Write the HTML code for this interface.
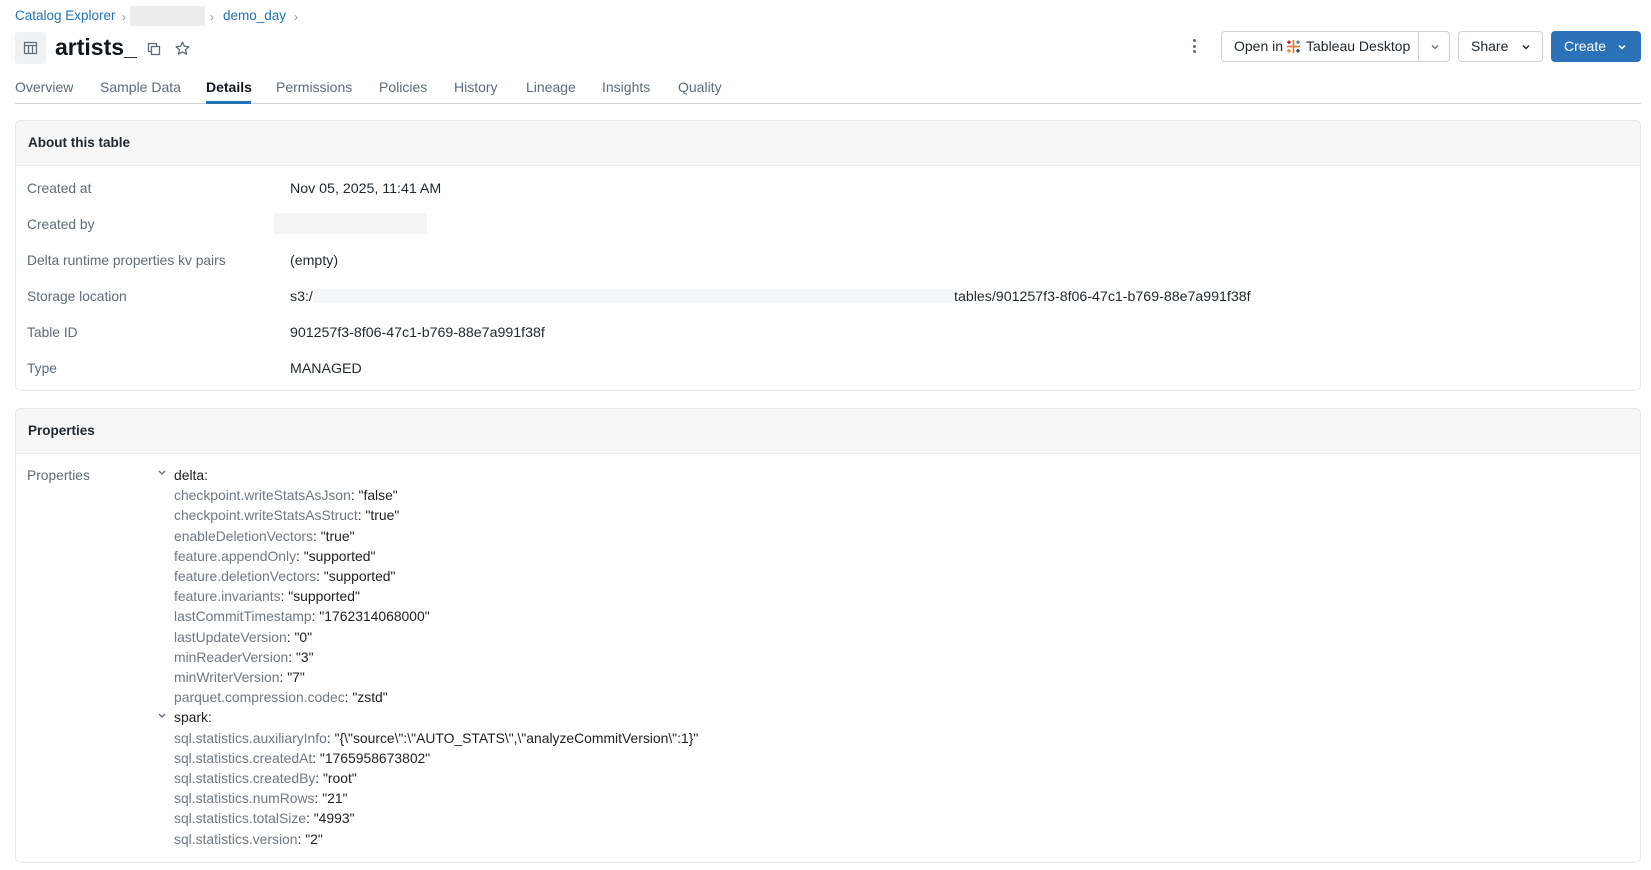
<!DOCTYPE html>
<html><head><meta charset="utf-8"><style>
*{box-sizing:border-box;margin:0;padding:0}
body{width:1651px;height:870px;background:#fff;font-family:"Liberation Sans",sans-serif;color:#1f272d;position:relative;overflow:hidden;font-size:14px}
.a{position:absolute;white-space:nowrap}
.bc{top:8px;font-size:13.5px;color:#2272b4}
.sep{color:#8a939b;font-size:12px}
.tab{top:79px;font-size:14px;color:#5f6b76}
.card{position:absolute;left:15px;width:1626px;border:1px solid #e8e8e8;border-radius:6px;overflow:hidden}
.hdr{background:#f7f7f7;border-bottom:1px solid #e8e8e8;font-weight:bold;font-size:13.5px;padding-left:12px;color:#1f272d}
.lab{color:#5f6b76;left:27px;font-size:13.8px}
.val{left:290px;color:#1f272d;font-size:14.2px}
.btn{position:absolute;top:31px;height:31px;border:1px solid #cdd1d5;border-radius:4px;background:#fff;font-size:14px;color:#1f272d;line-height:29px}
.k{color:#6f7780}
.tree{left:174px;top:465px;line-height:20.2px;font-size:13.9px;color:#1f1f1f}
</style></head><body>
<div class="a bc" style="left:15px">Catalog Explorer</div>
<div class="a sep" style="left:122px;top:10px">›</div>
<div class="a" style="left:130px;top:6px;width:75px;height:20px;background:#ececec"></div>
<div class="a sep" style="left:210px;top:10px">›</div>
<div class="a bc" style="left:223px">demo_day</div>
<div class="a sep" style="left:294px;top:10px">›</div>

<div class="a" style="left:15px;top:32px;width:31px;height:32px;background:#f0f1f2;border-radius:4px">
<svg width="31" height="32" viewBox="0 0 31 32"><rect x="9.5" y="10.5" width="12" height="11" fill="none" stroke="#5f6b76" stroke-width="1.2"/><line x1="9.5" y1="13.5" x2="21.5" y2="13.5" stroke="#5f6b76" stroke-width="1.2"/><line x1="13.5" y1="13.5" x2="13.5" y2="21.5" stroke="#5f6b76" stroke-width="1.2"/><line x1="17.5" y1="13.5" x2="17.5" y2="21.5" stroke="#5f6b76" stroke-width="1.2"/></svg></div>
<div class="a" style="left:55px;top:34px;font-size:23px;font-weight:bold;color:#11171c">artists_</div>
<svg class="a" style="left:146px;top:41px" width="16" height="16" viewBox="0 0 16 16"><rect x="2.5" y="2.5" width="8" height="8" fill="none" stroke="#5f6b76" stroke-width="1.3"/><rect x="5.5" y="5.5" width="8" height="8" fill="#fff" stroke="#5f6b76" stroke-width="1.3"/></svg>
<svg class="a" style="left:174px;top:40px" width="17" height="17" viewBox="0 0 24 24"><path d="M12 3l2.7 5.8 6.3.7-4.7 4.3 1.3 6.2L12 16.9 6.4 20l1.3-6.2L3 9.5l6.3-.7z" fill="none" stroke="#5f6b76" stroke-width="1.8" stroke-linejoin="round"/></svg>

<div class="a" style="left:1193px;top:39px;width:3px">
<div style="width:3px;height:3px;border-radius:50%;background:#5f6b76;margin-bottom:2.5px"></div><div style="width:3px;height:3px;border-radius:50%;background:#5f6b76;margin-bottom:2.5px"></div><div style="width:3px;height:3px;border-radius:50%;background:#5f6b76"></div></div>
<div class="btn" style="left:1221px;width:229px">
<span style="position:absolute;left:12px">Open in</span>
<svg style="position:absolute;left:64px;top:7px" width="15" height="15" viewBox="0 0 15 15"><g stroke-width="1.6"><line x1="7.5" y1="1" x2="7.5" y2="14" stroke="#e8762d"/><line x1="1" y1="7.5" x2="14" y2="7.5" stroke="#e8762d"/><line x1="3" y1="1.5" x2="3" y2="5" stroke="#c72037"/><line x1="1.2" y1="3.2" x2="4.8" y2="3.2" stroke="#c72037"/><line x1="12" y1="1.5" x2="12" y2="5" stroke="#5b879b"/><line x1="10.2" y1="3.2" x2="13.8" y2="3.2" stroke="#5b879b"/><line x1="3" y1="10" x2="3" y2="13.5" stroke="#eb912b"/><line x1="1.2" y1="11.8" x2="4.8" y2="11.8" stroke="#eb912b"/><line x1="12" y1="10" x2="12" y2="13.5" stroke="#1f457e"/><line x1="10.2" y1="11.8" x2="13.8" y2="11.8" stroke="#1f457e"/></g></svg>
<span style="position:absolute;left:84px">Tableau Desktop</span>
<div style="position:absolute;left:196px;top:0;width:1px;height:29px;background:#cdd1d5"></div>
<svg style="position:absolute;left:208px;top:11px" width="10" height="8" viewBox="0 0 10 8"><path d="M2 2.5l3 3 3-3" fill="none" stroke="#5f6b76" stroke-width="1.3"/></svg>
</div>
<div class="btn" style="left:1458px;width:85px"><span style="position:absolute;left:12px">Share</span>
<svg style="position:absolute;left:62px;top:11px" width="10" height="8" viewBox="0 0 10 8"><path d="M2 2.5l3 3 3-3" fill="none" stroke="#1f272d" stroke-width="1.5"/></svg></div>
<div class="btn" style="left:1551px;width:90px;background:#2b72b8;border-color:#2b72b8;color:#fff"><span style="position:absolute;left:12px">Create</span>
<svg style="position:absolute;left:65px;top:11px" width="10" height="8" viewBox="0 0 10 8"><path d="M2 2.5l3 3 3-3" fill="none" stroke="#fff" stroke-width="1.5"/></svg></div>

<div class="a tab" style="left:15px">Overview</div>
<div class="a tab" style="left:100px">Sample Data</div>
<div class="a tab" style="left:206px;color:#11171c;font-weight:bold">Details</div>
<div class="a tab" style="left:276px">Permissions</div>
<div class="a tab" style="left:379px">Policies</div>
<div class="a tab" style="left:454px">History</div>
<div class="a tab" style="left:526px">Lineage</div>
<div class="a tab" style="left:602px">Insights</div>
<div class="a tab" style="left:678px">Quality</div>
<div class="a" style="left:15px;top:103px;width:1626px;height:1px;background:#d1d5d9"></div>
<div class="a" style="left:206px;top:101px;width:45px;height:3px;background:#2272b4"></div>

<div class="card" style="top:120px;height:271px"><div class="hdr" style="height:45px;line-height:44px">About this table</div></div>
<div class="a lab" style="top:181px">Created at</div><div class="a val" style="top:181px">Nov 05, 2025, 11:41 AM</div>
<div class="a lab" style="top:217px">Created by</div><div class="a" style="left:274px;top:213px;width:153px;height:21px;background:#f4f4f4"></div>
<div class="a lab" style="top:253px">Delta runtime properties kv pairs</div><div class="a val" style="top:253px">(empty)</div>
<div class="a lab" style="top:289px">Storage location</div><div class="a val" style="top:289px">s3:/</div>
<div class="a" style="left:314px;top:289px;width:640px;height:14px;background:#f6f7f8"></div>
<div class="a val" style="left:954px;top:289px">tables/901257f3-8f06-47c1-b769-88e7a991f38f</div>
<div class="a lab" style="top:325px">Table ID</div><div class="a val" style="top:325px">901257f3-8f06-47c1-b769-88e7a991f38f</div>
<div class="a lab" style="top:361px">Type</div><div class="a val" style="top:361px">MANAGED</div>

<div class="card" style="top:408px;height:455px"><div class="hdr" style="height:45px;line-height:44px">Properties</div></div>
<div class="a lab" style="top:468px">Properties</div>
<svg class="a" style="left:157px;top:469px" width="10" height="8" viewBox="0 0 10 8"><path d="M2 2l3 3 3-3" fill="none" stroke="#5f6b76" stroke-width="1.3"/></svg>
<svg class="a" style="left:157px;top:712px" width="10" height="8" viewBox="0 0 10 8"><path d="M2 2l3 3 3-3" fill="none" stroke="#5f6b76" stroke-width="1.3"/></svg>
<div class="a tree">
<div>delta:</div>
<div><span class="k">checkpoint.writeStatsAsJson</span>: "false"</div>
<div><span class="k">checkpoint.writeStatsAsStruct</span>: "true"</div>
<div><span class="k">enableDeletionVectors</span>: "true"</div>
<div><span class="k">feature.appendOnly</span>: "supported"</div>
<div><span class="k">feature.deletionVectors</span>: "supported"</div>
<div><span class="k">feature.invariants</span>: "supported"</div>
<div><span class="k">lastCommitTimestamp</span>: "1762314068000"</div>
<div><span class="k">lastUpdateVersion</span>: "0"</div>
<div><span class="k">minReaderVersion</span>: "3"</div>
<div><span class="k">minWriterVersion</span>: "7"</div>
<div><span class="k">parquet.compression.codec</span>: "zstd"</div>
<div>spark:</div>
<div><span class="k">sql.statistics.auxiliaryInfo</span>: "{\"source\":\"AUTO_STATS\",\"analyzeCommitVersion\":1}"</div>
<div><span class="k">sql.statistics.createdAt</span>: "1765958673802"</div>
<div><span class="k">sql.statistics.createdBy</span>: "root"</div>
<div><span class="k">sql.statistics.numRows</span>: "21"</div>
<div><span class="k">sql.statistics.totalSize</span>: "4993"</div>
<div><span class="k">sql.statistics.version</span>: "2"</div>
</div>
</body></html>
